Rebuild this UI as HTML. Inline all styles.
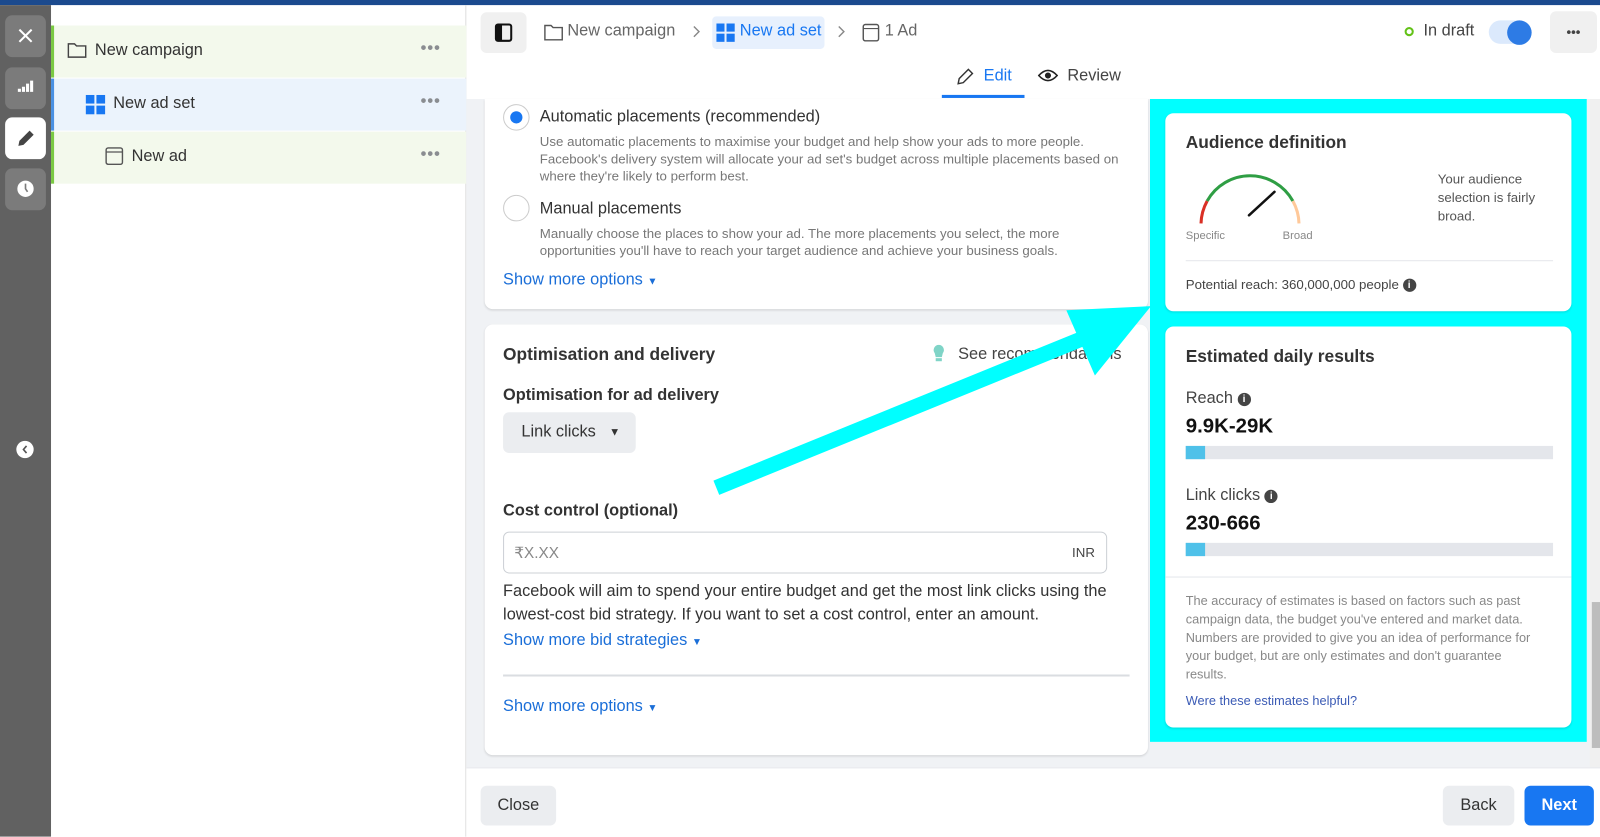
<!DOCTYPE html>
<html><head><meta charset="utf-8"><style>
*{box-sizing:border-box;margin:0;padding:0}
html,body{width:1600px;height:837px;overflow:hidden;background:#fff;font-family:"Liberation Sans",Arial,sans-serif;color:#1c1e21}
#w{position:absolute;left:0;top:0;width:1568px;height:820px;transform:scale(1.02041);transform-origin:0 0;overflow:hidden}
.a{position:absolute}
.rb{position:absolute;left:5px;width:40px;height:41px;border-radius:7px;background:#7b7b7b}
.row{position:absolute;left:50px;width:407px;height:51px;font-size:16px;color:#333}
.dots{position:absolute;right:25px;top:14px;color:#8a8d91;font-size:16px;letter-spacing:1px;font-weight:bold}
.card{position:absolute;background:#fff;border-radius:8px;box-shadow:0 1px 2px rgba(0,0,0,.12)}
.t{font-size:16px}
.s{font-size:13px;color:#777;line-height:17px}
.lnk{color:#1a6ed8;font-size:16px}
.bar{position:absolute;left:20px;width:360px;height:13px;background:#e4e6eb}
.bar i{display:block;width:19px;height:13px;background:#4fc1e9}
.info{display:inline-block;width:13px;height:13px;border-radius:50%;background:#444;color:#fff;font-size:10px;font-weight:bold;text-align:center;line-height:13px;vertical-align:1px;font-style:normal}
.btn{position:absolute;background:#ebedf0;border-radius:6px;font-size:16px;text-align:center;line-height:40px}
</style></head><body><div id="w">
<div class="a" style="left:0;top:0;width:1568px;height:5px;background:#1b4a8e"></div>
<!-- rail -->
<div class="a" style="left:0;top:5px;width:50px;height:815px;background:#616161"></div>
<div class="rb" style="top:15px"><svg width="40" height="41"><path d="M14 14L26 26M26 14L14 26" stroke="#fff" stroke-width="2"/></svg></div>
<div class="rb" style="top:66px"><svg width="40" height="41"><path d="M14 24v-3M18 24v-5M22 24v-8M26 24v-11" stroke="#fff" stroke-width="3"/></svg></div>
<div class="rb" style="top:115px;background:#fff"><svg width="40" height="41"><path d="M13 28l1-5 10-10 4 4-10 10z" fill="#444"/></svg></div>
<div class="rb" style="top:165px"><svg width="40" height="41"><circle cx="20" cy="20" r="8" fill="#fff"/><path d="M20 15v5l2 3" stroke="#7b7b7b" stroke-width="1.6" fill="none"/></svg></div>
<div class="a" style="left:16px;top:432px;width:17px;height:17px;border-radius:50%;background:#fff"><svg width="17" height="17"><path d="M10 5l-3 3.5 3 3.5" stroke="#555" stroke-width="1.6" fill="none"/></svg></div>
<!-- left panel -->
<div class="a" style="left:456px;top:5px;width:1px;height:815px;background:#ddd"></div>
<div class="row" style="top:25px;background:#f3f9ec;border-left:3px solid #7ac943"><svg class="a" style="left:13px;top:15px" width="20" height="18"><path d="M1 3h6l2 2h9v11H1z" fill="none" stroke="#444" stroke-width="1.4"/></svg><span class="a" style="left:40px;top:16px">New campaign</span><span class="dots">•••</span></div>
<div class="row" style="top:77px;background:#ebf3fc;border-left:3px solid #4a90e2"><svg class="a" style="left:31px;top:16px" width="20" height="20"><rect x="0" y="0" width="8.5" height="8.5" fill="#1877f2"/><rect x="10.5" y="0" width="8.5" height="8.5" fill="#1877f2"/><rect x="0" y="10.5" width="8.5" height="8.5" fill="#1877f2"/><rect x="10.5" y="10.5" width="8.5" height="8.5" fill="#1877f2"/></svg><span class="a" style="left:58px;top:16px">New ad set</span><span class="dots">•••</span></div>
<div class="row" style="top:129px;background:#f3f9ec;border-left:3px solid #7ac943"><svg class="a" style="left:50px;top:15px" width="18" height="18"><rect x="1" y="1" width="16" height="16" rx="2" fill="none" stroke="#555" stroke-width="1.4"/><path d="M1 5h16" stroke="#555" stroke-width="1.2"/></svg><span class="a" style="left:76px;top:16px">New ad</span><span class="dots">•••</span></div>
<!-- header -->
<div class="a" style="left:471px;top:12px;width:45px;height:40px;background:#f0f0f0;border-radius:6px"><svg width="45" height="40"><rect x="15" y="12" width="15" height="16" rx="2" fill="none" stroke="#111" stroke-width="2"/><rect x="15" y="12" width="6" height="16" fill="#111"/></svg></div>
<svg class="a" style="left:533px;top:22px" width="20" height="18"><path d="M1 3h6l2 2h9v12H1z" fill="none" stroke="#555" stroke-width="1.4"/></svg>
<span class="a" style="left:556px;top:22px;font-size:16px;color:#666">New campaign</span>
<svg class="a" style="left:678px;top:24px" width="10" height="14"><path d="M2 2l5 5-5 5" stroke="#888" stroke-width="1.4" fill="none"/></svg>
<div class="a" style="left:698px;top:16px;width:110px;height:32px;background:#e7f0fd;border-radius:4px"></div>
<svg class="a" style="left:702px;top:23px" width="19" height="19"><rect x="0" y="0" width="8" height="8" fill="#1877f2"/><rect x="10" y="0" width="8" height="8" fill="#1877f2"/><rect x="0" y="10" width="8" height="8" fill="#1877f2"/><rect x="10" y="10" width="8" height="8" fill="#1877f2"/></svg>
<span class="a" style="left:725px;top:22px;font-size:16px;color:#1877f2">New ad set</span>
<svg class="a" style="left:820px;top:24px" width="10" height="14"><path d="M2 2l5 5-5 5" stroke="#888" stroke-width="1.4" fill="none"/></svg>
<svg class="a" style="left:845px;top:23px" width="17" height="18"><rect x="1" y="1" width="15" height="16" rx="2" fill="none" stroke="#555" stroke-width="1.4"/><path d="M1 5h15" stroke="#555" stroke-width="1.2"/></svg>
<span class="a" style="left:867px;top:22px;font-size:16px;color:#666">1 Ad</span>
<svg class="a" style="left:1376px;top:26px" width="10" height="10"><circle cx="5" cy="5" r="3.5" fill="none" stroke="#63c218" stroke-width="2"/></svg>
<span class="a" style="left:1395px;top:22px;font-size:16px;color:#444">In draft</span>
<div class="a" style="left:1459px;top:20px;width:42px;height:23px;background:#dbe9fc;border-radius:12px"></div>
<div class="a" style="left:1477px;top:20px;width:24px;height:24px;background:#2d7be5;border-radius:50%"></div>
<div class="a" style="left:1519px;top:11px;width:46px;height:41px;background:#f0f0f0;border-radius:6px;text-align:center;font-size:13px;line-height:41px;color:#444;font-weight:bold">•••</div>
<svg class="a" style="left:936px;top:65px" width="20" height="20"><path d="M3 17l1-5 9-9 4 4-9 9z" fill="none" stroke="#333" stroke-width="1.4"/></svg>
<span class="a" style="left:964px;top:66px;font-size:16px;color:#1877f2">Edit</span>
<div class="a" style="left:923px;top:93px;width:81px;height:3px;background:#1877f2"></div>
<svg class="a" style="left:1017px;top:66px" width="20" height="16"><path d="M1 8q9-10 18 0q-9 10-18 0z" fill="none" stroke="#222" stroke-width="1.6"/><circle cx="10" cy="8" r="3" fill="#222"/></svg>
<span class="a" style="left:1046px;top:66px;font-size:16px;color:#444">Review</span>
<!-- gray content -->
<div class="a" style="left:457px;top:97px;width:1111px;height:655px;background:#f0f2f5"></div>
<div class="card" style="left:475px;top:97px;width:650px;height:206px;border-radius:0 0 8px 8px">
<div class="a" style="left:18px;top:5px;width:26px;height:26px;border-radius:50%;border:1px solid #ccc;background:#fff"><div style="margin:6px;width:12px;height:12px;border-radius:50%;background:#1877f2"></div></div>
<div class="a t" style="left:54px;top:9px;color:#333">Automatic placements (recommended)</div>
<div class="a s" style="left:54px;top:33px;width:580px">Use automatic placements to maximise your budget and help show your ads to more people. Facebook's delivery system will allocate your ad set's budget across multiple placements based on where they're likely to perform best.</div>
<div class="a" style="left:18px;top:94px;width:26px;height:26px;border-radius:50%;border:1px solid #ccc;background:#fff"></div>
<div class="a t" style="left:54px;top:99px;color:#333">Manual placements</div>
<div class="a s" style="left:54px;top:123px;width:540px">Manually choose the places to show your ad. The more placements you select, the more opportunities you'll have to reach your target audience and achieve your business goals.</div>
<div class="a lnk" style="left:18px;top:169px">Show more options <span style="font-size:10px">▼</span></div>
</div>
<div class="card" style="left:475px;top:318px;width:650px;height:422px">
<div class="a" style="left:18px;top:20px;font-size:17px;font-weight:bold;color:#333">Optimisation and delivery</div>
<svg class="a" style="left:438px;top:19px" width="14" height="20"><path d="M7 1a5 5 0 0 1 4 8l-1 4H4L3 9A5 5 0 0 1 7 1z" fill="#7fd4c7"/><rect x="4" y="14" width="6" height="3" fill="#7fd4c7"/></svg>
<div class="a t" style="left:464px;top:21px;color:#444">See recommendations</div>
<div class="a" style="left:18px;top:61px;font-size:16px;font-weight:bold;color:#333">Optimisation for ad delivery</div>
<div class="btn" style="left:18px;top:86px;width:130px;height:40px;text-align:left;padding-left:18px;color:#333">Link clicks <span style="position:absolute;left:104px;font-size:11px">▼</span></div>
<div class="a" style="left:18px;top:174px;font-size:16px;font-weight:bold;color:#333">Cost control (optional)</div>
<div class="a" style="left:18px;top:203px;width:592px;height:41px;border:1px solid #ccd0d5;border-radius:6px"><span class="a" style="left:10px;top:11px;font-size:15px;color:#888">₹X.XX</span><span class="a" style="right:11px;top:12px;font-size:13px;color:#444">INR</span></div>
<div class="a" style="left:18px;top:250px;width:610px;font-size:16px;line-height:23px;color:#333">Facebook will aim to spend your entire budget and get the most link clicks using the lowest-cost bid strategy. If you want to set a cost control, enter an amount.</div>
<div class="a lnk" style="left:18px;top:301px">Show more bid strategies <span style="font-size:10px">▼</span></div>
<div class="a" style="left:18px;top:343px;width:614px;height:2px;background:#dadde1"></div>
<div class="a lnk" style="left:18px;top:366px">Show more options <span style="font-size:10px">▼</span></div>
</div>
<!-- cyan -->
<div class="a" style="left:1127px;top:97px;width:428px;height:630px;background:#00ffff"></div>
<div class="card" style="left:1142px;top:111px;width:398px;height:194px">
<div class="a" style="left:20px;top:19px;font-size:17px;font-weight:bold;color:#333">Audience definition</div>
<svg class="a" style="left:30px;top:55px" width="110" height="60"><path d="M5 53A48 48 0 0 1 11 31" stroke="#d93025" stroke-width="3" fill="none"/><path d="M11 31A48 48 0 0 1 95 31" stroke="#2f9e44" stroke-width="3" fill="none"/><path d="M95 31A48 48 0 0 1 101 53" stroke="#ffc99a" stroke-width="3" fill="none"/><path d="M52 45L77 22" stroke="#111" stroke-width="2.5" stroke-linecap="round"/></svg>
<div class="a" style="left:20px;top:114px;font-size:11px;color:#888">Specific</div>
<div class="a" style="left:115px;top:114px;font-size:11px;color:#888">Broad</div>
<div class="a" style="left:267px;top:56px;width:120px;font-size:13px;line-height:18px;color:#555">Your audience selection is fairly broad.</div>
<div class="a" style="left:20px;top:144px;width:360px;height:1px;background:#e4e6eb"></div>
<div class="a" style="left:20px;top:160px;font-size:13px;color:#444">Potential reach: 360,000,000 people <i class="info">i</i></div>
</div>
<div class="card" style="left:1142px;top:320px;width:398px;height:393px">
<div class="a" style="left:20px;top:20px;font-size:17px;font-weight:bold;color:#333">Estimated daily results</div>
<div class="a t" style="left:20px;top:62px;color:#444">Reach <i class="info">i</i></div>
<div class="a" style="left:20px;top:87px;font-size:20px;font-weight:bold;color:#111">9.9K-29K</div>
<div class="bar" style="top:117px"><i></i></div>
<div class="a t" style="left:20px;top:157px;color:#444">Link clicks <i class="info">i</i></div>
<div class="a" style="left:20px;top:182px;font-size:20px;font-weight:bold;color:#111">230-666</div>
<div class="bar" style="top:212px"><i></i></div>
<div class="a" style="left:0;top:245px;width:398px;height:1px;background:#e4e6eb"></div>
<div class="a" style="left:20px;top:260px;width:345px;font-size:12.5px;line-height:18px;color:#888">The accuracy of estimates is based on factors such as past campaign data, the budget you've entered and market data. Numbers are provided to give you an idea of performance for your budget, but are only estimates and don't guarantee results.</div>
<div class="a" style="left:20px;top:360px;font-size:12.5px;color:#3b5bb5">Were these estimates helpful?</div>
</div>
<!-- scrollbar -->
<div class="a" style="left:1558px;top:97px;width:10px;height:655px;background:#f0f0f0"></div>
<div class="a" style="left:1560px;top:590px;width:8px;height:143px;background:#bdbdbd"></div>
<!-- arrow -->
<svg class="a" style="left:0;top:0" width="1568" height="820"><path d="M702 478L1085 322" stroke="#00ffff" stroke-width="15"/><polygon points="1045,304 1128,300 1073,368" fill="#00ffff"/></svg>
<!-- footer -->
<div class="a" style="left:457px;top:752px;width:1111px;height:68px;background:#fff;border-top:1px solid #e4e6eb"></div>
<div class="btn" style="left:471px;top:770px;width:74px;height:39px;color:#333">Close</div>
<div class="btn" style="left:1414px;top:770px;width:70px;height:39px;color:#333">Back</div>
<div class="btn" style="left:1494px;top:770px;width:68px;height:39px;background:#1877f2;color:#fff;font-weight:bold">Next</div>
</div></body></html>
